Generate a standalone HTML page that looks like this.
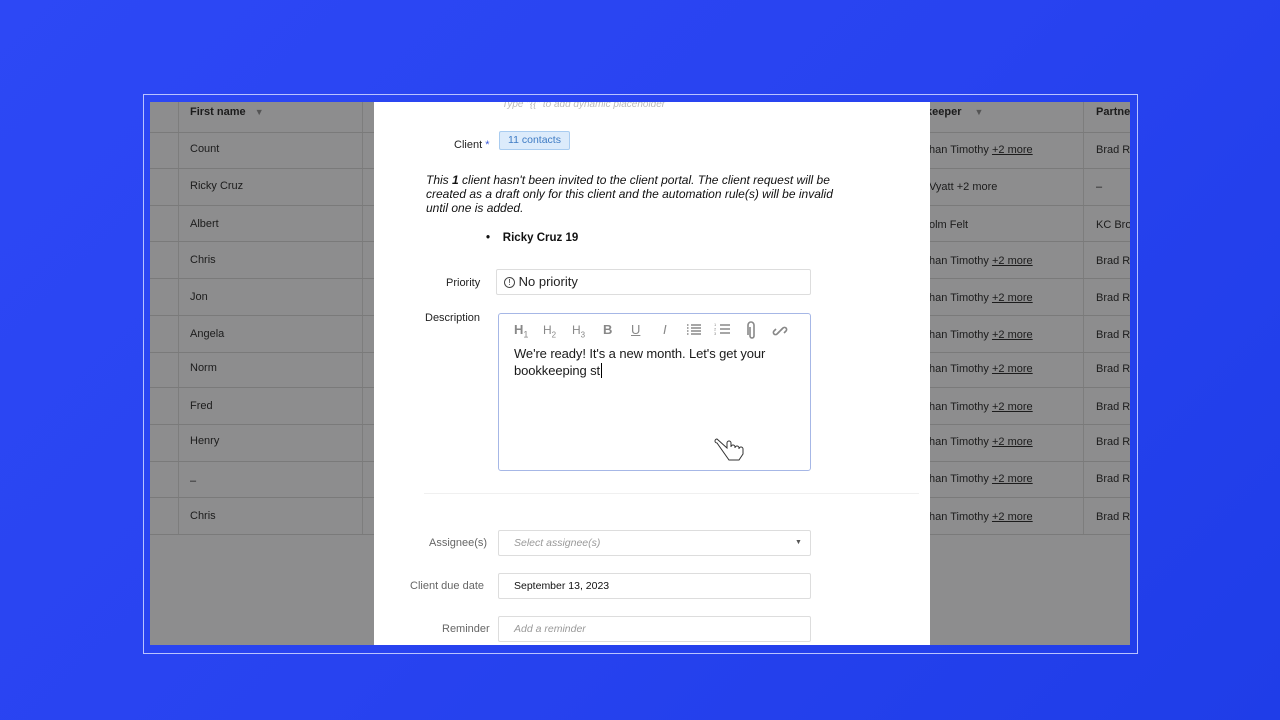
<!DOCTYPE html>
<html><head><meta charset="utf-8"><style>
*{margin:0;padding:0;box-sizing:border-box}
body{width:1280px;height:720px;overflow:hidden;position:relative;font-family:"Liberation Sans",sans-serif;background:linear-gradient(135deg,#2d48f5 0%,#2843f0 50%,#1f3de8 100%)}
.a{position:absolute;white-space:nowrap}
.frame{left:143px;top:94px;width:995px;height:560px;border:1px solid #b9c3ff}
.gray{left:150px;top:102px;width:980px;height:543px;background:#8d8d8e;overflow:hidden}
.hl{position:absolute;left:0;width:980px;height:1px;background:#7a7a7a}
.vl{position:absolute;top:0;height:432px;width:1px;background:#7d7d7d}
.t{position:absolute;font-size:11px;color:#1c1c1c}
.modal{left:374px;top:102px;width:556px;height:543px;background:#fff;overflow:hidden}
.m{position:absolute;white-space:nowrap;font-size:11px;color:#222}
.box{position:absolute;border:1px solid #ddd;border-radius:2px;background:#fff}
.u{text-decoration:underline}
</style></head><body>
<div class="a frame"></div>
<div class="a gray">
<div class="vl" style="left:28px"></div><div class="vl" style="left:212px"></div><div class="vl" style="left:933px"></div>
<div class="hl" style="top:30px"></div><div class="hl" style="top:66px"></div><div class="hl" style="top:103px"></div><div class="hl" style="top:139px"></div><div class="hl" style="top:176px"></div><div class="hl" style="top:213px"></div><div class="hl" style="top:250px"></div><div class="hl" style="top:285px"></div><div class="hl" style="top:322px"></div><div class="hl" style="top:359px"></div><div class="hl" style="top:395px"></div><div class="hl" style="top:432px"></div>
<div class="t" style="left:40px;top:4px;font-weight:bold">First name <span style="color:#555;font-size:9px;margin-left:6px">▼</span></div>
<div class="t" style="left:40px;top:41px">Count</div>
<div class="t" style="left:40px;top:78px">Ricky Cruz</div>
<div class="t" style="left:40px;top:116px">Albert</div>
<div class="t" style="left:40px;top:152px">Chris</div>
<div class="t" style="left:40px;top:189px">Jon</div>
<div class="t" style="left:40px;top:226px">Angela</div>
<div class="t" style="left:40px;top:260px">Norm</div>
<div class="t" style="left:40px;top:298px">Fred</div>
<div class="t" style="left:40px;top:333px">Henry</div>
<div class="t" style="left:40px;top:373px">–</div>
<div class="t" style="left:40px;top:408px">Chris</div>
<div class="t" style="left:776px;top:4px;font-weight:bold">keeper <span style="color:#555;font-size:9px;margin-left:10px">▼</span></div>
<div class="t" style="left:946px;top:4px;font-weight:bold">Partner</div>
<div class="t" style="left:779px;top:42px">han Timothy <span class="u">+2 more</span></div>
<div class="t" style="left:779px;top:79px">Vyatt +2 more</div>
<div class="t" style="left:779px;top:117px">olm Felt</div>
<div class="t" style="left:779px;top:153px">han Timothy <span class="u">+2 more</span></div>
<div class="t" style="left:779px;top:190px">han Timothy <span class="u">+2 more</span></div>
<div class="t" style="left:779px;top:227px">han Timothy <span class="u">+2 more</span></div>
<div class="t" style="left:779px;top:261px">han Timothy <span class="u">+2 more</span></div>
<div class="t" style="left:779px;top:299px">han Timothy <span class="u">+2 more</span></div>
<div class="t" style="left:779px;top:334px">han Timothy <span class="u">+2 more</span></div>
<div class="t" style="left:779px;top:371px">han Timothy <span class="u">+2 more</span></div>
<div class="t" style="left:779px;top:409px">han Timothy <span class="u">+2 more</span></div>
<div class="t" style="left:946px;top:42px">Brad Ri</div>
<div class="t" style="left:946px;top:79px">–</div>
<div class="t" style="left:946px;top:117px">KC Bro</div>
<div class="t" style="left:946px;top:153px">Brad Ri</div>
<div class="t" style="left:946px;top:190px">Brad Ri</div>
<div class="t" style="left:946px;top:227px">Brad Ri</div>
<div class="t" style="left:946px;top:261px">Brad Ri</div>
<div class="t" style="left:946px;top:299px">Brad Ri</div>
<div class="t" style="left:946px;top:334px">Brad Ri</div>
<div class="t" style="left:946px;top:371px">Brad Ri</div>
<div class="t" style="left:946px;top:409px">Brad Ri</div>
</div>
<div class="a modal">
<div class="m" style="left:128px;top:-3px;color:#bbb;font-style:italic;font-size:10px">Type "{{" to add dynamic placeholder</div>
<div class="m" style="left:80px;top:37px">Client <span style="color:#3b5bdb">*</span></div>
<div class="m" style="left:125px;top:29px;width:71px;height:19px;background:#dcebfb;border:1px solid #a9ccf0;border-radius:2px;color:#3e7bc4;font-size:10.5px;text-align:center;line-height:17px">11 contacts</div>
<div class="m" style="left:52px;top:71px;font-style:italic;font-size:12px;line-height:14px;color:#111">This <b>1</b> client hasn't been invited to the client portal. The client request will be<br>created as a draft only for this client and the automation rule(s) will be invalid<br>until one is added.</div>
<div class="m" style="left:112px;top:130px;font-weight:bold;font-size:11.5px;color:#111">•&nbsp;&nbsp;&nbsp;&nbsp;Ricky Cruz 19</div>
<div class="m" style="left:72px;top:175px">Priority</div>
<div class="box" style="left:122px;top:167px;width:315px;height:26px"></div>
<div class="m" style="left:130px;top:172px;font-size:13px;color:#222"><span style="display:inline-block;width:11px;height:11px;border:1.2px solid #444;border-radius:50%;font-size:8px;text-align:center;line-height:9px;vertical-align:1px">!</span> No priority</div>
<div class="m" style="left:51px;top:210px">Description</div>
<div class="box" style="left:124px;top:211px;width:313px;height:158px;border-color:#a6b7e6;border-radius:3px"></div>
<div class="m" style="left:140px;top:220px;color:#888;font-size:13px;font-weight:bold">H<sub style="font-size:9px;font-weight:normal">1</sub></div>
<div class="m" style="left:169px;top:221px;color:#888;font-size:12px">H<sub style="font-size:8px">2</sub></div>
<div class="m" style="left:198px;top:221px;color:#888;font-size:12px">H<sub style="font-size:8px">3</sub></div>
<div class="m" style="left:229px;top:220px;color:#888;font-size:13px;font-weight:bold">B</div>
<div class="m" style="left:257px;top:220px;color:#888;font-size:13px;text-decoration:underline">U</div>
<div class="m" style="left:289px;top:220px;color:#888;font-size:13px;font-style:italic">I</div>
<svg class="a" style="left:312px;top:221px" width="16" height="14" viewBox="0 0 16 14"><g stroke="#888" stroke-width="1.4"><path d="M5 2h10M5 5h10M5 8h10M5 11h10"/><path d="M1 2h1.5M1 5h1.5M1 8h1.5M1 11h1.5"/></g></svg>
<svg class="a" style="left:340px;top:220px" width="17" height="15" viewBox="0 0 17 15"><g stroke="#888" stroke-width="1.4"><path d="M6 3h10M6 7h10M6 11h10"/></g><g fill="#888" font-size="4" font-family="Liberation Sans"><text x="0" y="4">1</text><text x="0" y="8.5">2</text><text x="0" y="13">3</text></g></svg>
<svg class="a" style="left:370px;top:219px" width="14" height="18" viewBox="0 0 14 18"><path d="M4 14V4a3 3 0 016 0v11a2 2 0 01-4 0V6" fill="none" stroke="#888" stroke-width="1.6"/></svg>
<svg class="a" style="left:398px;top:221px" width="16" height="16" viewBox="0 0 16 16"><g fill="none" stroke="#888" stroke-width="1.6"><path d="M7 9l-2 2a2 2 0 01-3-3l2-2"/><path d="M9 7l2-2a2 2 0 013 3l-2 2"/><path d="M6 10l4-4"/></g></svg>
<div class="m" style="left:140px;top:243px;font-size:13px;line-height:17px;color:#1a1a1a;letter-spacing:-0.1px">We're ready! It's a new month. Let's get your<br>bookkeeping st<span style="border-left:1px solid #000;margin-left:1px"></span></div>
<svg class="a" style="left:340px;top:333px" width="32" height="28" viewBox="0 0 32 28"><path d="M3 4l10 9V8a2 2 0 014 0v4a2 2 0 014 0v1a2 2 0 014 0v1a2 2 0 014 0v5l-4 6H15L3 8a2 2 0 010-4z" fill="#fff" stroke="#333" stroke-width="1"/></svg>
<div style="position:absolute;left:50px;top:391px;width:495px;height:1px;background:#f0f0f0"></div>
<div class="m" style="left:55px;top:435px;color:#666">Assignee(s)</div>
<div class="box" style="left:124px;top:428px;width:313px;height:26px"></div>
<div class="m" style="left:140px;top:435px;color:#999;font-style:italic;font-size:10.5px">Select assignee(s)</div>
<div class="m" style="left:421px;top:437px;color:#555;font-size:7px">▼</div>
<div class="m" style="left:36px;top:478px;color:#666">Client due date</div>
<div class="box" style="left:124px;top:471px;width:313px;height:26px"></div>
<div class="m" style="left:140px;top:478px;color:#111;font-size:10.5px">September 13, 2023</div>
<div class="m" style="left:68px;top:521px;color:#666">Reminder</div>
<div class="box" style="left:124px;top:514px;width:313px;height:26px"></div>
<div class="m" style="left:140px;top:521px;color:#999;font-style:italic;font-size:10.5px">Add a reminder</div>
</div>
</body></html>
